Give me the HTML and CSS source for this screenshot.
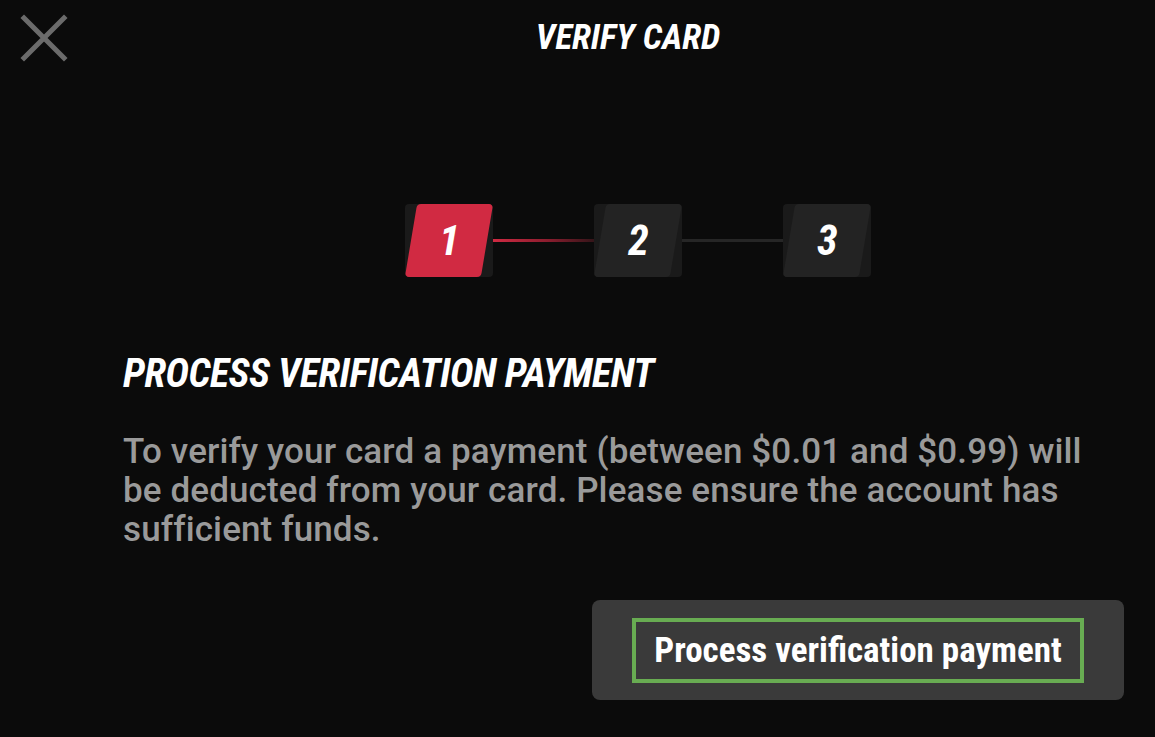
FILE: index.html
```html
<!DOCTYPE html>
<html lang="en">
<head>
  <meta charset="UTF-8">
  <title>Verify Card</title>
  <link rel="stylesheet" href="styles.css">
</head>
<body>

  <header class="topbar">
    <button class="close" aria-label="Close">
      <svg width="48" height="48" viewBox="0 0 48 48">
        <path d="M4 4 L44 44 M44 4 L4 44" stroke="#6b6b6b" stroke-width="5" stroke-linecap="square" fill="none"/>
      </svg>
    </button>
    <h1 class="title">VERIFY CARD</h1>
  </header>

  <div class="stepper">
    <div class="step active"><div class="step-face"><span>1</span></div></div>
    <div class="line line-active"></div>
    <div class="step"><div class="step-face"><span>2</span></div></div>
    <div class="line"></div>
    <div class="step"><div class="step-face"><span>3</span></div></div>
  </div>

  <main class="content">
    <h2>PROCESS VERIFICATION PAYMENT</h2>
    <p>To verify your card a payment (between $0.01 and $0.99) will be deducted from your card. Please ensure the account has sufficient funds.</p>
    <div class="actions">
      <button class="primary"><span class="focus">Process verification payment</span></button>
    </div>
  </main>

</body>
</html>
```

FILE: styles.css
```css
body {
  margin: 0;
  background: #0b0b0b;
  font-family: 'Roboto', 'Liberation Sans', sans-serif;
  font-stretch: 75%;
  color: #fff;
  width: 1155px;
  height: 737px;
  overflow: hidden;
}

.topbar {
  display: flex;
  align-items: flex-start;
  height: 204px;
}

.close {
  background: none;
  border: none;
  padding: 0;
  margin: 14px 0 0 20px;
  width: 48px;
  height: 48px;
  cursor: pointer;
}

.title {
  flex: 1;
  margin: 17px 0 0 0;
  padding-left: 33px;
  text-align: center;
  font-size: 35px;
  font-weight: 700;
  font-style: italic;
  letter-spacing: 0;
}

.stepper {
  display: flex;
  align-items: center;
  padding-left: 405px;
  height: 73px;
}

.step {
  width: 88px;
  height: 73px;
  display: flex;
  justify-content: center;
  background: #1a1a1a;
  border-radius: 4px;
}

.step-face {
  width: 76px;
  height: 100%;
  transform: skewX(-9.5deg);
  background: #232323;
  border-radius: 4px;
  display: flex;
  align-items: center;
  justify-content: center;
}

.step.active .step-face {
  background: #d12a42;
}

.step-face span {
  transform: skewX(9.5deg);
  font-size: 42px;
  font-weight: 700;
  font-style: italic;
}

.line {
  width: 101px;
  height: 3px;
  background: #262626;
}

.line-active {
  background: linear-gradient(90deg, #d02a42, #8a1d2e 55%, #341519);
}

.content {
  padding: 74px 31px 0 123px;
}

.content h2 {
  margin: 0;
  font-size: 40px;
  font-weight: 700;
  font-style: italic;
  letter-spacing: -0.5px;
  line-height: 46px;
}

.content p {
  margin: 35px 0 0;
  color: #9a9a9a;
  font-size: 35px;
  font-weight: 500;
  font-stretch: 100%;
  letter-spacing: 0.12px;
  line-height: 39px;
  max-width: 980px;
}

.actions {
  display: flex;
  justify-content: flex-end;
  margin-top: 51px;
}

.primary {
  width: 532px;
  height: 100px;
  background: #3a3a3a;
  border: none;
  border-radius: 8px;
  display: flex;
  align-items: center;
  justify-content: center;
  padding: 0;
  font-family: inherit;
  font-stretch: 75%;
  cursor: pointer;
}

.focus {
  border: 4px solid #68ac52;
  padding: 8px 18px;
  color: #fff;
  font-size: 35px;
  font-weight: 700;
  line-height: 41px;
}
```
